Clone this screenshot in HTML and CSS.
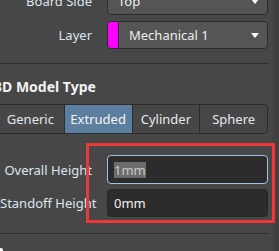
FILE: index.html
```html
<!DOCTYPE html>
<html lang="en">
<head>
    <meta charset="UTF-8">
    <title>3D Body Properties</title>
    <link rel="stylesheet" href="styles.css">
</head>
<body>
    <div class="panel">
        <div class="content">
            <div class="row first">
                <span class="label">Board Side</span>
                <div class="select">
                    <span class="value">Top</span>
                    <span class="caret"></span>
                </div>
            </div>
            <div class="row">
                <span class="label">Layer</span>
                <div class="select">
                    <span class="swatch"></span>
                    <span class="value">Mechanical 1</span>
                    <span class="caret"></span>
                </div>
            </div>

            <div class="separator"></div>

            <h3 class="section-title">3D Model Type</h3>

            <div class="segmented">
                <span class="segment">Generic</span>
                <span class="segment active">Extruded</span>
                <span class="segment">Cylinder</span>
                <span class="segment">Sphere</span>
            </div>

            <div class="fields">
                <div class="row">
                    <span class="label">Overall Height</span>
                    <div class="input focused"><span class="selected-text">1mm</span></div>
                </div>
                <div class="row second">
                    <span class="label">Standoff Height</span>
                    <div class="input">0mm</div>
                </div>
                <div class="callout"></div>
            </div>

            <div class="separator lower"></div>

            <div class="checkbox"></div>
        </div>
        <div class="strip"></div>
    </div>
</body>
</html>
```

FILE: styles.css
```css
body {
    margin: 0;
    width: 279px;
    height: 251px;
    overflow: hidden;
    background-color: #474747;
    font-family: "Noto Sans", "Open Sans", sans-serif;
    font-size: 13px;
    color: #e4e8ee;
}

.panel {
    display: flex;
    height: 251px;
}

.content {
    flex: 1;
    padding-right: 4px;
}

.strip {
    width: 7px;
    background-color: #404040;
}

.row {
    display: grid;
    grid-template-columns: 92px 161px;
    column-gap: 15px;
    align-items: center;
    margin-top: 6px;
}

.row.first {
    margin-top: -13px;
}

.label {
    text-align: right;
    white-space: nowrap;
    color: #dde5ee;
}

.select {
    display: flex;
    align-items: center;
    height: 26px;
    background-color: #555555;
    border: 1px solid #2c2c2c;
    border-radius: 4px;
    overflow: hidden;
}

.select .value {
    flex: 1;
    padding-left: 10px;
    color: #eeeeee;
}

.swatch {
    width: 10px;
    height: 100%;
    background-color: #ff00ff;
    border-right: 1px solid #2c2c2c;
}

.caret {
    width: 0;
    height: 0;
    margin-right: 8px;
    border-left: 4px solid transparent;
    border-right: 4px solid transparent;
    border-top: 5px solid #ffffff;
}

.separator {
    margin-top: 14px;
    width: 269px;
    height: 1px;
    background-color: #2e2e2e;
}

.separator.lower {
    margin-top: 16px;
}

.section-title {
    margin: 14px 0 0 -6px;
    height: 18px;
    line-height: 18px;
    font-size: 14px;
    font-weight: bold;
    white-space: nowrap;
    color: #f2f2f2;
}

.segmented {
    display: flex;
    margin: 8px 0 0 -4px;
    width: 270px;
    height: 28px;
    border: 1px solid #2c2c2c;
    border-radius: 4px;
    overflow: hidden;
}

.segment {
    flex: 1;
    display: flex;
    align-items: center;
    justify-content: center;
    border-left: 1px solid #2c2c2c;
    color: #e4e8ee;
}

.segment:first-child {
    border-left: none;
}

.segment.active {
    background-color: #5d7f9f;
    color: #f4f4f4;
}

.fields {
    position: relative;
    margin-top: 21px;
}

.input {
    display: flex;
    align-items: center;
    height: 26px;
    padding-left: 6px;
    background-color: #2c2c2c;
    border: 1px solid #262626;
    border-radius: 4px;
    color: #f0f0f0;
}

.input.focused {
    height: 27px;
    border-color: #9fc3e8;
}

.row.second {
    margin-top: 5px;
}

.selected-text {
    background-color: #6c6c6c;
    color: #c9c9c9;
    line-height: 16px;
}

.callout {
    position: absolute;
    top: -12px;
    bottom: -6px;
    left: 86px;
    right: -6px;
    border: 3px solid #ec3838;
}

.checkbox {
    margin: 14px 0 0 -8px;
    width: 11px;
    height: 11px;
    background-color: #f4f4f4;
    border-radius: 2px;
}
```
